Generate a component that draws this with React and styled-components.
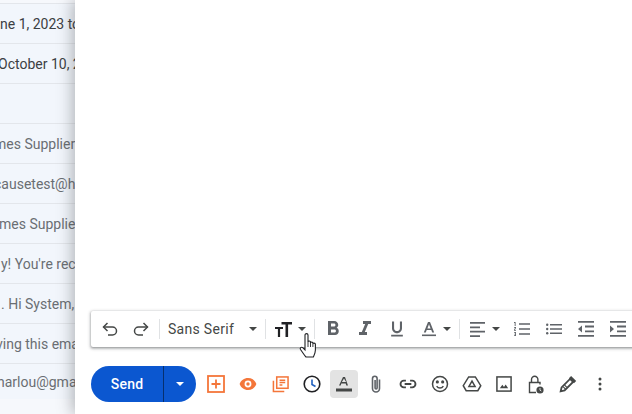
import React from 'react'
import styled, { createGlobalStyle } from 'styled-components'

const Global = createGlobalStyle`
  html, body { margin: 0; padding: 0; background: #f6f8fc; }
  body { font-family: Roboto, "Liberation Sans", sans-serif; }
`

const Page = styled.div`
  display: flex;
  width: 632px;
  height: 414px;
  overflow: hidden;
`

const ListPane = styled.div`
  width: 75px;
  flex: none;
  overflow: hidden;
  padding-top: 3px;
  box-sizing: border-box;
`

const Row = styled.div`
  height: ${p => p.$h || 40}px;
  box-sizing: border-box;
  border-top: 1px solid #e3e6eb;
  background: #f2f6fc;
  display: flex;
  align-items: center;
  white-space: nowrap;
  font-size: 14px;
  color: ${p => (p.$read ? '#6a6e73' : '#3c4043')};
  text-indent: ${p => p.$shift}px;
`

const Compose = styled.div`
  flex: 1;
  min-width: 0;
  background: #fff;
  box-shadow: -3px 0 14px rgba(60, 64, 67, 0.35);
  position: relative;
  z-index: 1;
  display: flex;
  flex-direction: column;
  justify-content: flex-end;
  padding: 0 0 12px 16px;
`

const FormatBar = styled.div`
  display: flex;
  align-items: center;
  height: 36px;
  width: 560px;
  flex: none;
  margin-bottom: 19px;
  background: #fff;
  border-radius: 2px 0 0 2px;
  box-shadow: 0 1px 3px 1px rgba(60, 64, 67, 0.3), 0 1px 2px rgba(60, 64, 67, 0.3);
`

const ToolBtn = styled.div`
  width: ${p => p.$w || 32}px;
  height: 28px;
  flex: none;
  box-sizing: border-box;
  padding-left: ${p => p.$pl || 0}px;
  display: flex;
  align-items: center;
  justify-content: center;
  gap: ${p => p.$gap || 0}px;
  color: #5f6368;
`

const Sep = styled.div`
  width: 1px;
  height: 20px;
  flex: none;
  margin-left: ${p => p.$ml || 0}px;
  background: #e0e2e4;
`

const FontLabel = styled.div`
  width: 105px;
  padding: 0 8px;
  box-sizing: border-box;
  flex: none;
  display: flex;
  align-items: center;
  justify-content: space-between;
  font-size: 14px;
  letter-spacing: 0.3px;
  color: #444746;
`

const Caret = styled.span`
  width: 0;
  height: 0;
  flex: none;
  border-left: 4px solid transparent;
  border-right: 4px solid transparent;
  border-top: 4px solid ${p => p.$color || '#444746'};
`

const Actions = styled.div`
  display: flex;
  align-items: center;
  height: 36px;
`

const SendGroup = styled.div`
  display: flex;
  height: 36px;
  width: 105px;
  flex: none;
  margin-right: 4px;
  border-radius: 18px;
  overflow: hidden;
  background: #0b57d0;
  color: #fff;
`

const SendLabel = styled.div`
  width: 73px;
  box-sizing: border-box;
  border-right: 1px solid #06306f;
  display: flex;
  align-items: center;
  justify-content: center;
  font-size: 14px;
  font-weight: 500;
  letter-spacing: 0.2px;
`

const SendMore = styled.div`
  flex: 1;
  display: flex;
  align-items: center;
  justify-content: center;
`

const ActionBtn = styled.div`
  width: 32px;
  height: 28px;
  flex: none;
  display: flex;
  align-items: center;
  justify-content: center;
  color: #444746;
`

const ActiveSwatch = styled.div`
  width: 28px;
  height: 28px;
  border-radius: 4px;
  background: #e3e3e3;
  display: flex;
  align-items: center;
  justify-content: center;
`

const Pointer = styled.svg`
  position: absolute;
  left: 224px;
  top: 333px;
`

const Icon = ({ size = 20, children, ...rest }) => (
  <svg width={size} height={size} viewBox="0 0 24 24" fill="none" stroke="currentColor" strokeWidth="2" {...rest}>
    {children}
  </svg>
)

const Solid = ({ d, size = 20 }) => (
  <svg width={size} height={size} viewBox="0 0 24 24" fill="currentColor">
    <path d={d} />
  </svg>
)

const ORANGE = '#f4763a'

const rows = [
  { text: 'ne 1, 2023 to', shift: 0 },
  { text: 'October 10, 2023', shift: -2 },
  { text: '', shift: 0 },
  { text: 'mes Supplier', shift: -6, read: true },
  { text: 'causetest@hotmail', shift: -6, read: true },
  { text: 'mes Supplier', shift: -1, read: true },
  { text: "y! You're receiving", shift: 1, read: true },
  { text: '. Hi System,', shift: 1, read: true },
  { text: 'ving this email', shift: -4, read: true },
  { text: 'harlou@gmail.com', shift: -3, read: true, h: 36 },
]

const App = () => (
  <Page>
    <Global />
    <ListPane>
      {rows.map((r, i) => (
        <Row key={i} $shift={r.shift} $read={r.read} $h={r.h}>{r.text}</Row>
      ))}
    </ListPane>
    <Compose>
      <FormatBar>
        <ToolBtn $w={38}>
          <svg width="16" height="14" viewBox="0 0 16 14" fill="none" stroke="#444746" strokeWidth="1.5">
            <path d="M5.500 1 1.500 5l4 4" /><path d="M1.500 5h9a3.900 3.900 0 0 1 0 8H6" />
          </svg>
        </ToolBtn>
        <ToolBtn $w={24}>
          <svg width="16" height="14" viewBox="0 0 16 14" fill="none" stroke="#444746" strokeWidth="1.5">
            <path d="m10.500 1 4 4-4 4" /><path d="M14.500 5h-9a3.900 3.900 0 0 0 0 8H10" />
          </svg>
        </ToolBtn>
        <Sep $ml={6} />
        <FontLabel>Sans Serif<Caret /></FontLabel>
        <Sep />
        <ToolBtn $w={48} $gap={6}>
          <svg width="17" height="15" viewBox="0 0 17 15" fill="#202124">
            <path d="M6.500 0H17v2.500h-3.900V15h-2.600V2.500h-4z" />
            <path d="M0 5h8v2H5.100v8H2.900V7H0z" />
          </svg>
          <Caret />
        </ToolBtn>
        <Sep />
        <ToolBtn $w={34} $pl={2}><Solid size={24} d="M15.600 10.790c.970-.670 1.650-1.770 1.650-2.790 0-2.260-1.750-4-4-4H7v14h7.040c2.090 0 3.710-1.700 3.710-3.790 0-1.520-.860-2.820-2.150-3.420zM10 6.500h3c.830 0 1.500.670 1.500 1.500s-.670 1.500-1.500 1.500h-3v-3zm3.500 9H10v-3h3.500c.830 0 1.500.670 1.500 1.500s-.670 1.500-1.500 1.500z" /></ToolBtn>
        <ToolBtn><Solid size={24} d="M10 4v3h2.210l-3.420 8H6v3h8v-3h-2.210l3.420-8H18V4z" /></ToolBtn>
        <ToolBtn><Solid size={20} d="M12 17c3.310 0 6-2.690 6-6V3h-2.500v8c0 1.930-1.570 3.500-3.500 3.500S8.500 12.930 8.500 11V3H6v8c0 3.310 2.690 6 6 6zm-7 2v2h14v-2H5z" /></ToolBtn>
        <ToolBtn $w={46} $gap={7}>
          <svg width="14" height="16" viewBox="0 0 14 16" fill="#5f6368">
            <path d="M6 1h2l4.200 10.500h-2l-.9-2.400H4.700l-.9 2.400h-2zM5.400 7.400h3.200L7 3.200z" />
            <rect x="0" y="13.500" width="14" height="1.600" />
          </svg>
          <Caret />
        </ToolBtn>
        <Sep />
        <ToolBtn $w={46} $gap={7} $pl={4}>
          <svg width="15" height="15" viewBox="0 0 15 15" fill="#5f6368">
            <path d="M0 0h15v1.800H0zM0 4.400h10v1.800H0zM0 8.800h15v1.800H0zM0 13.200h10V15H0z" />
          </svg>
          <Caret />
        </ToolBtn>
        <ToolBtn>
          <svg width="16" height="14" viewBox="0 0 16 14" fill="#5f6368">
            <path d="M5 1.200h11v1.500H5zM5 6.200h11v1.500H5zM5 11.200h11v1.500H5zM0 0h1.600v4H.7V1H0zM0 5h2v.7L1 8h1v.8H0v-.7l1-2.300H0zM0 10h2v4H0v-.7h1.200v-.9H.4v-.6h.8v-1H0z" />
          </svg>
        </ToolBtn>
        <ToolBtn>
          <svg width="16" height="12" viewBox="0 0 16 12" fill="#5f6368">
            <path d="M4 1h12v1.600H4zM4 5.200h12v1.600H4zM4 9.400h12V11H4z" />
            <circle cx="1.200" cy="1.800" r="1.200" /><circle cx="1.200" cy="6" r="1.200" /><circle cx="1.200" cy="10.200" r="1.200" />
          </svg>
        </ToolBtn>
        <ToolBtn>
          <svg width="16" height="16" viewBox="0 0 16 16" fill="#5f6368">
            <path d="M0 0h16v1.800H0zM7 4.600h9v1.800H7zM7 9.400h9v1.800H7zM0 14h16v1.800H0zM4 4.500v7L0 8z" />
          </svg>
        </ToolBtn>
        <ToolBtn>
          <svg width="16" height="16" viewBox="0 0 16 16" fill="#5f6368">
            <path d="M0 0h16v1.800H0zM7 4.600h9v1.800H7zM7 9.400h9v1.800H7zM0 14h16v1.800H0zM0 4.500v7L4 8z" />
          </svg>
        </ToolBtn>
      </FormatBar>
      <Actions>
        <SendGroup>
          <SendLabel>Send</SendLabel>
          <SendMore><Caret $color="#fff" /></SendMore>
        </SendGroup>
        <ActionBtn>
          <svg width="18" height="18" viewBox="0 0 18 18" fill="none" stroke={ORANGE} strokeWidth="1.800">
            <rect x="1" y="1" width="16" height="16" /><path d="M9 4.500v9M4.500 9h9" />
          </svg>
        </ActionBtn>
        <ActionBtn>
          <svg width="18" height="12" viewBox="0 0 20 14">
            <path fillRule="evenodd" fill={ORANGE} d="M10 0C5.500 0 1.700 2.800.2 7c1.500 4.200 5.300 7 9.800 7s8.300-2.800 9.800-7C18.300 2.800 14.500 0 10 0zm0 11a4 4 0 1 1 0-8 4 4 0 0 1 0 8zm0-2a2 2 0 1 0 0-4 2 2 0 0 0 0 4z" />
          </svg>
        </ActionBtn>
        <ActionBtn>
          <svg width="17" height="17" viewBox="0 0 18 18" fill="none" stroke={ORANGE} strokeWidth="1.600">
            <rect x="5" y="1" width="12" height="12" /><path d="M8 4.500h6M8 7h6M8 9.500h3" /><path d="M1.500 5v11.500H13" />
          </svg>
        </ActionBtn>
        <ActionBtn>
          <svg width="18" height="18" viewBox="0 0 18 18" fill="none" strokeWidth="1.600">
            <circle cx="9" cy="9" r="7.800" stroke="#202124" /><path d="M9 4.500V9.500l3.500 2" stroke="#1f5fbf" />
          </svg>
        </ActionBtn>
        <ActionBtn>
          <ActiveSwatch>
            <svg width="20" height="20" viewBox="0 0 20 20" fill="#444746">
              <path d="M9 3h2l3 8.500h-1.700l-.6-2H7.300l-.6 2H5zM7.900 8h4.200L10 4.500z" />
              <rect x="2" y="14.500" width="16" height="3" />
            </svg>
          </ActiveSwatch>
        </ActionBtn>
        <ActionBtn>
          <svg width="12" height="18" viewBox="0 0 12 18" fill="none" stroke="#5f6368" strokeWidth="1.600">
            <path d="M9.500 4.500v9a3.500 3.500 0 0 1-7 0V3.500a2.300 2.300 0 0 1 4.600 0v9.500a1 1 0 0 1-2 0V5" />
          </svg>
        </ActionBtn>
        <ActionBtn>
          <Icon size={20} strokeWidth="2.200"><path d="M9.500 8H7a4 4 0 0 0 0 8h2.500M14.500 8H17a4 4 0 0 1 0 8h-2.500M8 12h8" /></Icon>
        </ActionBtn>
        <ActionBtn>
          <Icon size={20} strokeWidth="1.800">
            <circle cx="12" cy="12" r="9" /><path d="M8 14.500c1 1.500 2.300 2.200 4 2.200s3-.7 4-2.200" />
            <circle cx="8.800" cy="9.500" r="1" fill="currentColor" /><circle cx="15.200" cy="9.500" r="1" fill="currentColor" />
          </Icon>
        </ActionBtn>
        <ActionBtn>
          <Icon size={20} strokeWidth="1.800"><path d="M8 3.500h8L22.500 14l-3.500 6H5l-3.500-6zM12 8.500l-3.700 6.500h7.400z" /></Icon>
        </ActionBtn>
        <ActionBtn>
          <Icon size={20} strokeWidth="1.800"><rect x="3.500" y="3.500" width="17" height="17" /><path d="m7 17 3-4 2 2.500 2-3 3 4.500z" fill="currentColor" stroke="none" /></Icon>
        </ActionBtn>
        <ActionBtn>
          <svg width="16" height="19" viewBox="0 0 16 19" fill="none" stroke="#444746" strokeWidth="1.400">
            <path d="M8 17.500H1.500V7.500h10.500v2" /><path d="M3.500 7.500V4.500a3.200 3.200 0 0 1 6.400 0v3" />
            <circle cx="12" cy="15" r="3.600" fill="#444746" stroke="none" />
            <path d="M12 13v2.200l1.300.8" stroke="#fff" strokeWidth="0.800" />
          </svg>
        </ActionBtn>
        <ActionBtn>
          <svg width="18" height="18" viewBox="0 0 16 16" fill="none" stroke="#444746" strokeWidth="1.600">
            <path d="m1.500 14.500.8-3.500 7.500-7.500 2.700 2.700L5 13.700z" /><path d="m9.800 1.800 4.500 4.500" strokeWidth="2.800" /><path d="m5 9 2 2M3.800 10.500l2 2" strokeWidth="1" />
          </svg>
        </ActionBtn>
        <ActionBtn>
          <svg width="4" height="14" viewBox="0 0 4 14" fill="#444746">
            <circle cx="2" cy="2" r="1.500" /><circle cx="2" cy="7" r="1.500" /><circle cx="2" cy="12" r="1.500" />
          </svg>
        </ActionBtn>
      </Actions>
      <Pointer width="19" height="25" viewBox="0 0 19 25">
        <path fill="#fff" stroke="#202124" strokeWidth="1.100" d="M6 2c0-1.800 3-1.800 3 0v7c0-1.400 2.500-1.400 2.500 0v1c0-1.300 2.400-1.300 2.400 0v1c0-1.200 2.500-1.200 2.500.2V17c0 3-1 5-2 7H7c-1.500-1.500-3-4-5.500-7.500-1-1.500.8-3 2.200-1.800L6 17z" />
        <path fill="none" stroke="#202124" strokeWidth="0.900" d="M9 9v5M11.500 10v4M13.900 11v3" />
      </Pointer>
    </Compose>
  </Page>
)

export default App
